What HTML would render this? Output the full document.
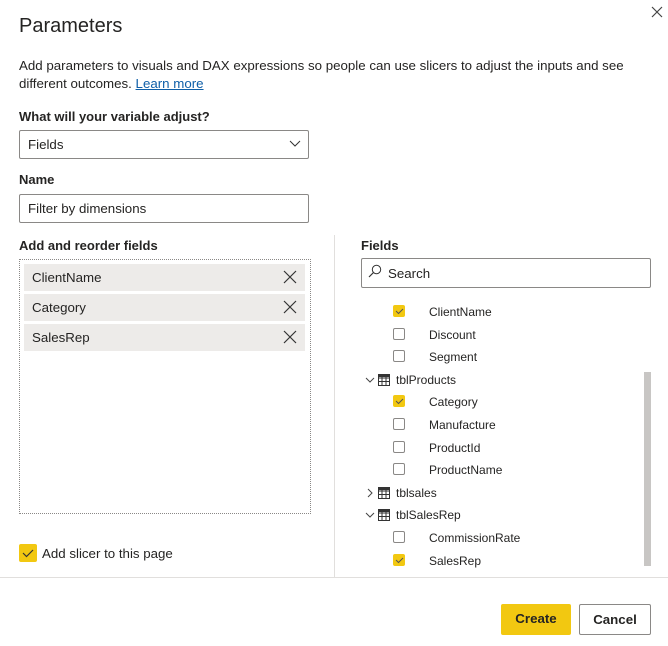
<!DOCTYPE html><html><head><style>
*{margin:0;padding:0;box-sizing:border-box}
body{width:668px;height:646px;background:#fff;font-family:"Liberation Sans",sans-serif;color:#252423;position:relative;overflow:hidden;font-size:13.3px}
.a{position:absolute}
.lbl{font-weight:bold;font-size:13px}
.inp{border:1px solid #8a8886;border-radius:2px;height:29px;padding:6px 8px;font-size:13.3px}
.item{position:absolute;left:24px;width:281px;height:27px;background:#edebe9;padding:6px 8px;font-size:13.3px}
.x{position:absolute;right:8px;top:6px}
.row{position:absolute;font-size:12px;height:20px;line-height:20px}
.cb{position:absolute;width:12px;height:12px;border:1px solid #8a8886;border-radius:2px}
.cb.on{background:#f2c811;border-color:#f2c811}
.btn{position:absolute;top:604px;height:31px;border-radius:2px;font-size:13.3px;font-weight:bold;text-align:center;line-height:30px}
</style></head><body>
<div class="a" style="left:19px;top:15px;font-size:20px">Parameters</div>
<svg class="a" style="left:651px;top:6px" width="12" height="12"><path d="M1 1L11 11M11 1L1 11" stroke="#444" stroke-width="1.2"/></svg>
<div class="a" style="left:19px;top:57px;width:610px;line-height:18px;font-size:13.3px">Add parameters to visuals and DAX expressions so people can use slicers to adjust the inputs and see different outcomes. <span style="color:#0f5fa8;text-decoration:underline">Learn more</span></div>
<div class="a lbl" style="left:19px;top:109px">What will your variable adjust?</div>
<div class="a inp" style="left:19px;top:130px;width:290px">Fields</div>
<svg class="a" style="left:289px;top:140px" width="12" height="8"><path d="M1 1L6 6L11 1" fill="none" stroke="#333"/></svg>
<div class="a lbl" style="left:19px;top:172px">Name</div>
<div class="a inp" style="left:19px;top:194px;width:290px">Filter by dimensions</div>
<div class="a lbl" style="left:19px;top:238px">Add and reorder fields</div>
<div class="a" style="left:19px;top:259px;width:292px;height:255px;border:1px dotted #8a8886"></div>
<div class="item" style="top:264px">ClientName<svg class="x" width="14" height="14"><path d="M1 1L13 13M13 1L1 13" stroke="#333" stroke-width="1.2"/></svg></div>
<div class="item" style="top:294px">Category<svg class="x" width="14" height="14"><path d="M1 1L13 13M13 1L1 13" stroke="#333" stroke-width="1.2"/></svg></div>
<div class="item" style="top:324px">SalesRep<svg class="x" width="14" height="14"><path d="M1 1L13 13M13 1L1 13" stroke="#333" stroke-width="1.2"/></svg></div>
<div class="a" style="left:19px;top:544px;width:18px;height:18px;background:#f2c811;border-radius:2px"><svg width="18" height="18"><path d="M4 9L7.5 12.5L14 6" fill="none" stroke="#333" stroke-width="1.2"/></svg></div>
<div class="a" style="left:42px;top:546px;font-size:13.3px">Add slicer to this page</div>
<div class="a" style="left:334px;top:235px;width:1px;height:342px;background:#e1dfdd"></div>
<div class="a" style="left:0;top:577px;width:668px;height:1px;background:#e1dfdd"></div>
<div class="a lbl" style="left:361px;top:238px">Fields</div>
<div class="a" style="left:361px;top:258px;width:290px;height:30px;border:1px solid #8a8886;border-radius:2px"></div>
<svg class="a" style="left:368px;top:264px" width="14" height="14"><circle cx="8.5" cy="5.5" r="4.2" fill="none" stroke="#333"/><path d="M5.5 8.5L1 13" stroke="#333" stroke-width="1.2"/></svg>
<div class="a" style="left:388px;top:266px;font-size:13.3px">Search</div>
<div class="a" style="left:644px;top:372px;width:7px;height:194px;background:#c8c6c4"></div>
<div id="tree"></div>
<script>
var rows=[[1,'ClientName',1],[1,'Discount',0],[1,'Segment',0],[0,'tblProducts','d'],[1,'Category',1],[1,'Manufacture',0],[1,'ProductId',0],[1,'ProductName',0],[0,'tblsales','r'],[0,'tblSalesRep','d'],[1,'CommissionRate',0],[1,'SalesRep',1]];
var h='';rows.forEach(function(r,i){var y=302+i*22.6;
if(r[0]){h+='<div class="cb'+(r[2]?' on':'')+'" style="left:393px;top:'+(y+3)+'px">'+(r[2]?'<svg width="10" height="10" style="position:absolute;left:0;top:0"><path d="M2 5L4.5 7.5L9 3" fill="none" stroke="#555"/></svg>':'')+'</div><div class="row" style="left:429px;top:'+y+'px">'+r[1]+'</div>';}
else{var p=r[2]=='d'?'M1 3L5 7L9 3':'M3 1L7 5L3 9';h+='<svg class="a" style="left:365px;top:'+(y+5)+'px" width="10" height="10"><path d="'+p+'" fill="none" stroke="#444"/></svg><svg class="a" style="left:378px;top:'+(y+4)+'px" width="12" height="12"><rect x="0.5" y="0.5" width="11" height="11" fill="none" stroke="#333"/><path d="M0 4H12M0 7.5H12M4 0V12M8 0V12" stroke="#333"/><rect x="0" y="0" width="12" height="3" fill="#333"/></svg><div class="row" style="left:396px;top:'+y+'px">'+r[1]+'</div>';}
});document.getElementById('tree').innerHTML=h;
</script>
<div class="btn" style="left:501px;width:70px;background:#f2c811">Create</div>
<div class="btn" style="left:579px;width:72px;border:1px solid #8a8886;background:#fff">Cancel</div>
</body></html>
